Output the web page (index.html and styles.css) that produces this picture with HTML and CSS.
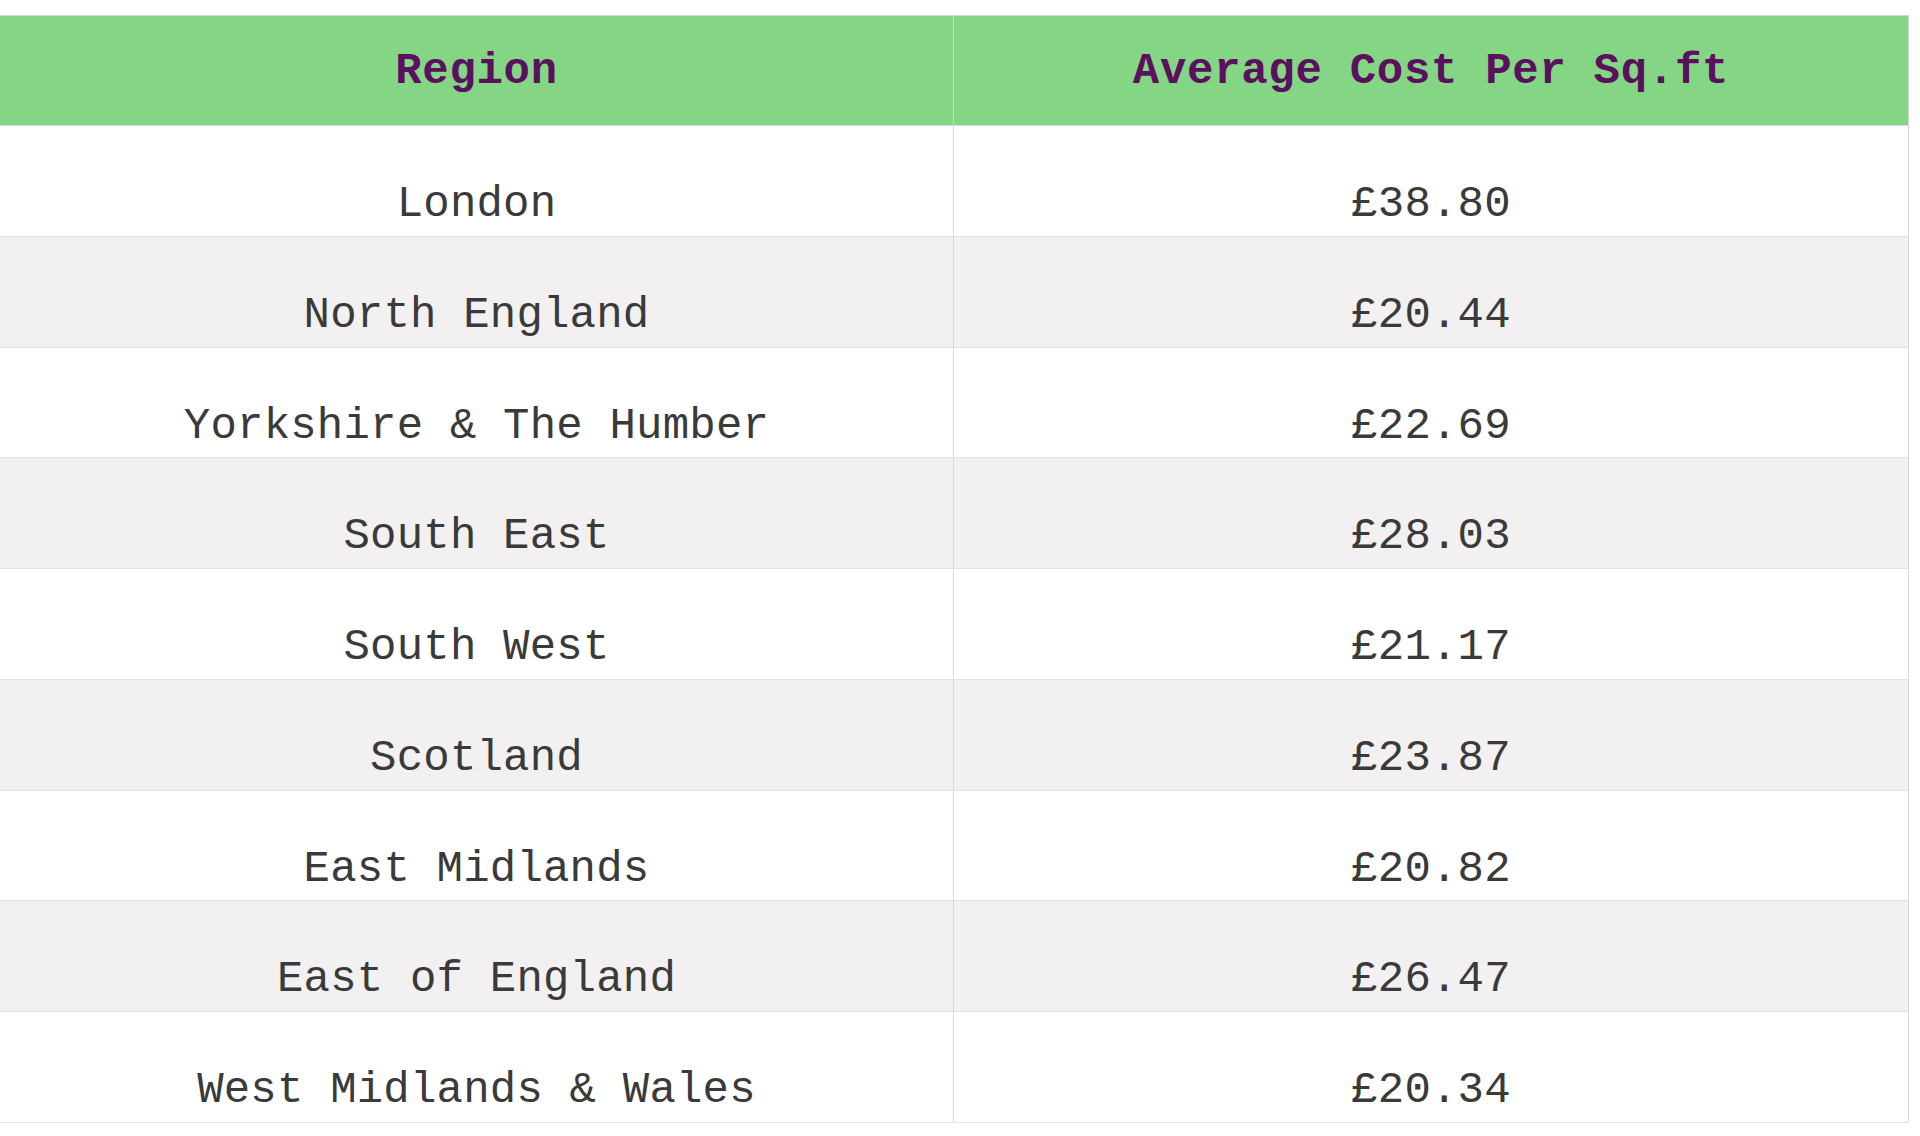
FILE: index.html
```html
<!DOCTYPE html>
<html lang="en">
<head>
<meta charset="utf-8">
<title>Average Cost Per Sq.ft</title>
<link rel="stylesheet" href="styles.css">
</head>
<body>
<table class="cost-table">
  <thead>
    <tr>
      <th class="col-region">Region</th>
      <th class="col-cost">Average Cost Per Sq.ft</th>
    </tr>
  </thead>
  <tbody>
    <tr><td>London</td><td>£38.80</td></tr>
    <tr><td>North England</td><td>£20.44</td></tr>
    <tr><td>Yorkshire &amp; The Humber</td><td>£22.69</td></tr>
    <tr><td>South East</td><td>£28.03</td></tr>
    <tr><td>South West</td><td>£21.17</td></tr>
    <tr><td>Scotland</td><td>£23.87</td></tr>
    <tr><td>East Midlands</td><td>£20.82</td></tr>
    <tr><td>East of England</td><td>£26.47</td></tr>
    <tr><td>West Midlands &amp; Wales</td><td>£20.34</td></tr>
  </tbody>
</table>
</body>
</html>
```
FILE: styles.css
```css
html, body {
  margin: 0;
  padding: 0;
  background: #ffffff;
}

body {
  padding-top: 15px;
  font-family: "Courier New", "Nimbus Mono PS", "Nimbus Mono L", "FreeMono", Courier, "Liberation Mono", monospace;
}

.cost-table {
  width: 1909px;
  border-collapse: collapse;
  table-layout: fixed;
  border-top: 1px solid #d6d6d6;
  border-right: 1px solid #d6d6d6;
  border-bottom: 1px solid #dcdcdc;
}

.col-region {
  width: 953px;
}

.cost-table th,
.cost-table td {
  text-align: center;
  font-size: 44px;
  line-height: 50px;
  white-space: nowrap;
}

.cost-table th {
  background: #84d685;
  color: #5b0f5f;
  font-weight: bold;
  letter-spacing: 0.7px;
  height: 109px;
  padding: 0;
  vertical-align: middle;
  border-bottom: 1px solid #d8d8d8;
}

.cost-table th + th {
  border-left: 1px solid #d4d4d4;
}

.cost-table td {
  color: #3a3a3a;
  letter-spacing: 0.2px;
  padding: 53px 0 6.75px;
  vertical-align: top;
  border-bottom: 1px solid #e2e2e2;
}

.cost-table td + td {
  border-left: 1px solid #d9d9d9;
}

.cost-table tbody tr:nth-child(even) td {
  background: #f2f0f1;
}
```
